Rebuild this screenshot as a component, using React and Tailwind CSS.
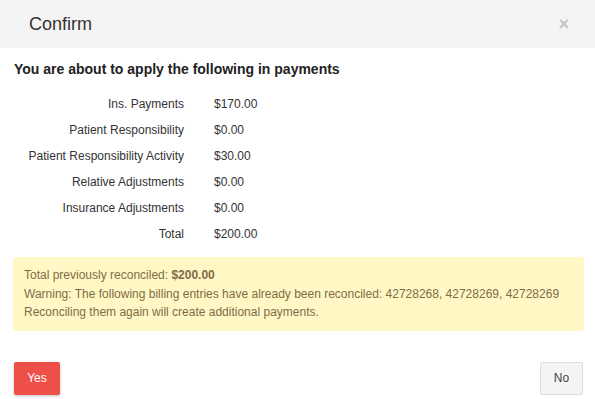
export default function App() {
  const rows = [
    ['Ins. Payments', '$170.00'],
    ['Patient Responsibility', '$0.00'],
    ['Patient Responsibility Activity', '$30.00'],
    ['Relative Adjustments', '$0.00'],
    ['Insurance Adjustments', '$0.00'],
    ['Total', '$200.00'],
  ]

  return (
    <div className="w-[595px] h-[399px] bg-white text-[#333] overflow-hidden" style={{ fontFamily: '"Liberation Sans", Arial, sans-serif' }}>
      <div className="h-12 bg-[#f4f4f4] flex items-center justify-between pl-[29px] pr-[26px]">
        <h2 className="text-[18px] text-[#333]">Confirm</h2>
        <span className="text-[18px] font-bold leading-none text-[#c4c4c4]">×</span>
      </div>

      <div className="px-[13px]">
        <h3 className="mt-[13px] pl-[1px] text-[14px] font-bold leading-4 text-[#222]">You are about to apply the following in payments</h3>

        <div className="mt-[14px] grid grid-cols-[171px_1fr] gap-x-[30px] text-[12px]">
          {rows.map(([label, value]) => (
            <div key={label} className="contents">
              <div className="h-[26px] flex items-center justify-end">{label}</div>
              <div className="h-[26px] flex items-center">{value}</div>
            </div>
          ))}
        </div>

        <div className="mt-[10px] w-[571px] rounded-[3px] bg-[#fff8c5] px-[11px] py-[9px] text-[12px] leading-[18.5px] text-[#7f6c47]">
          <div>Total previously reconciled: <b>$200.00</b></div>
          <div>Warning: The following billing entries have already been reconciled: 42728268, 42728269, 42728269</div>
          <div>Reconciling them again will create additional payments.</div>
        </div>

        <div className="mt-[31px] w-[570px] flex items-center justify-between pl-[1px]">
          <button className="h-[33px] w-[46px] rounded-[2px] bg-[#ee5049] text-[12px] text-white shadow-[0_1px_3px_rgba(0,0,0,0.25)]">Yes</button>
          <button className="h-[33px] w-[43px] rounded-[2px] border border-[#dcdcdc] bg-[#f4f4f4] text-[12px] text-[#444]">No</button>
        </div>
      </div>
    </div>
  )
}
